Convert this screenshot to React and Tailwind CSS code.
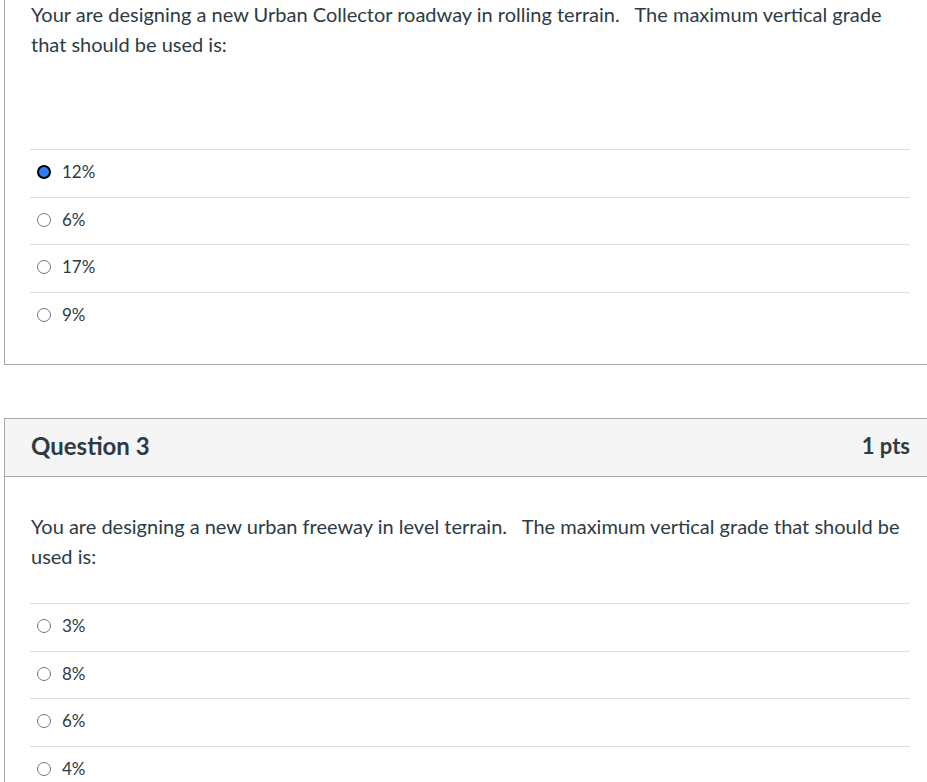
const q2Options = [
  { label: "12%", checked: true },
  { label: "6%" },
  { label: "17%" },
  { label: "9%" },
];

const q3Options = [{ label: "3%" }, { label: "8%" }, { label: "6%" }, { label: "4%" }];

function Radio({ checked }) {
  if (checked) {
    return (
      <span className="w-[14px] h-[14px] rounded-full border-2 border-black bg-[#2f7cf6] shrink-0" />
    );
  }
  return <span className="w-[14px] h-[14px] rounded-full border border-[#767676] bg-white shrink-0" />;
}

function Answers({ options }) {
  return (
    <div>
      {options.map((o, i) => (
        <div
          key={i}
          className="h-[47.5px] border-t border-[#dcdfe1] flex items-center pl-[7px] gap-[11px] pb-[2px]"
        >
          <Radio checked={o.checked} />
          <span className="text-[17px] leading-[20px] text-[#2d3b45]">{o.label}</span>
        </div>
      ))}
    </div>
  );
}

export default function App() {
  return (
    <div
      className="bg-white w-[927px] h-[782px] overflow-hidden text-[#2d3b45]"
      style={{ fontFamily: "Lato, 'Noto Sans', sans-serif" }}
    >
      {/* Question 2 (cut off at top) */}
      <div className="ml-[4px] w-[931px] border-l border-r border-b border-[#a8a8a8] pl-[25px] pr-[24px] pb-[25px]">
        <p className="text-[20px] leading-[30px] pl-[1px] -mt-[1px]">
          Your are designing a new Urban Collector roadway in rolling terrain.&nbsp;&nbsp; The maximum vertical grade
          that should be used is:
        </p>
        <div className="mt-[90px]">
          <Answers options={q2Options} />
        </div>
      </div>

      {/* Question 3 */}
      <div className="ml-[4px] mt-[53px] w-[931px] border border-[#a8a8a8]">
        <div className="h-[58px] bg-[#f5f5f5] border-b border-[#a8a8a8] flex items-center justify-between pl-[26px] pr-[24px] pb-[3px]">
          <h2 className="text-[24px] leading-[30px] font-bold text-[#2d3b45]">Question 3</h2>
          <span className="text-[22px] leading-[30px] font-bold text-[#2d3b45]">1 pts</span>
        </div>
        <div className="pl-[25px] pr-[24px] pt-[34px] pb-[25px]">
          <p className="text-[20px] leading-[30px] pl-[1px]">
            You are designing a new urban freeway in level terrain.&nbsp;&nbsp; The maximum vertical grade that should be
            used is:
          </p>
          <div className="mt-[32px]">
            <Answers options={q3Options} />
          </div>
        </div>
      </div>
    </div>
  );
}
